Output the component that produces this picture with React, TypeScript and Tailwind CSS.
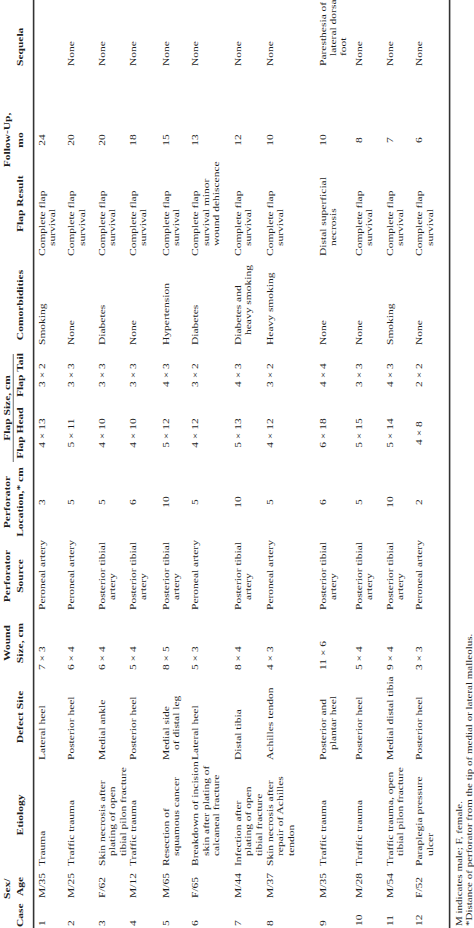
import React from "react";

type Cell = string | string[];
type Row = { h: string; c: Cell[] };

const colCls = [
  "w-[28px] pl-[2px]",
  "w-[32px] pl-[2px]",
  "w-[106px] pl-[2px]",
  "w-[90px] pl-[2px]",
  "w-[58px] pl-[2px]",
  "w-[76px] pl-[4px]",
  "w-[72px] text-center",
  "w-[66px] text-center",
  "w-[50px] text-center",
  "w-[90px] pl-[5px]",
  "w-[84px] pl-[4px]",
  "w-[72px] text-center",
  "w-[104px] pl-[38px]",
];

const rows: Row[] = [
  { h: "h-[37.5px]", c: ["1", "M/35", ["Trauma"], ["Lateral heel"], "7 × 3", ["Peroneal artery"], "3", "4 × 13", "3 × 2", ["Smoking"], ["Complete flap", "survival"], "24", [""]] },
  { h: "h-[37.5px]", c: ["2", "M/25", ["Traffic trauma"], ["Posterior heel"], "6 × 4", ["Peroneal artery"], "5", "5 × 11", "3 × 3", ["None"], ["Complete flap", "survival"], "20", ["None"]] },
  { h: "h-[38.7px]", c: ["3", "F/62", ["Skin necrosis after", "plating of open", "tibial pilon fracture"], ["Medial ankle"], "6 × 4", ["Posterior tibial", "artery"], "5", "4 × 10", "3 × 3", ["Diabetes"], ["Complete flap", "survival"], "20", ["None"]] },
  { h: "h-[41.3px]", c: ["4", "M/12", ["Traffic trauma"], ["Posterior heel"], "5 × 4", ["Posterior tibial", "artery"], "6", "4 × 10", "3 × 3", ["None"], ["Complete flap", "survival"], "18", ["None"]] },
  { h: "h-[37.5px]", c: ["5", "M/65", ["Resection of", "squamous cancer"], ["Medial side", "of distal leg"], "8 × 5", ["Posterior tibial", "artery"], "10", "5 × 12", "4 × 3", ["Hypertension"], ["Complete flap", "survival"], "15", ["None"]] },
  { h: "h-[52.5px]", c: ["6", "F/65", ["Breakdown of incision", "skin after plating of", "calcaneal fracture"], ["Lateral heel"], "5 × 3", ["Peroneal artery"], "5", "4 × 12", "3 × 2", ["Diabetes"], ["Complete flap", "survival minor", "wound dehiscence"], "13", ["None"]] },
  { h: "h-[40px]", c: ["7", "M/44", ["Infection after", "plating of open", "tibial fracture"], ["Distal tibia"], "8 × 4", ["Posterior tibial", "artery"], "10", "5 × 13", "4 × 3", ["Diabetes and", "heavy smoking"], ["Complete flap", "survival"], "12", ["None"]] },
  { h: "h-[66.2px]", c: ["8", "M/37", ["Skin necrosis after", "repair of Achilles", "tendon"], ["Achilles tendon"], "4 × 3", ["Peroneal artery"], "5", "4 × 12", "3 × 2", ["Heavy smoking"], ["Complete flap", "survival"], "10", ["None"]] },
  { h: "h-[45px]", c: ["9", "M/35", ["Traffic trauma"], ["Posterior and", "plantar heel"], "11 × 6", ["Posterior tibial", "artery"], "6", "6 × 18", "4 × 4", ["None"], ["Distal superficial", "necrosis"], "10", ["Paresthesia of", "lateral dorsal", "foot"]] },
  { h: "h-[38.8px]", c: ["10", "M/28", ["Traffic trauma"], ["Posterior heel"], "5 × 4", ["Posterior tibial", "artery"], "5", "5 × 15", "3 × 3", ["None"], ["Complete flap", "survival"], "8", ["None"]] },
  { h: "h-[37.5px]", c: ["11", "M/54", ["Traffic trauma, open", "tibial pilon fracture"], ["Medial distal tibia"], "9 × 4", ["Posterior tibial", "artery"], "10", "5 × 14", "4 × 3", ["Smoking"], ["Complete flap", "survival"], "7", ["None"]] },
  { h: "h-[45.4px]", c: ["12", "F/52", ["Paraplegia pressure", "ulcer"], ["Posterior heel"], "3 × 3", ["Peroneal artery"], "2", "4 × 8", "2 × 2", ["None"], ["Complete flap", "survival"], "6", ["None"]] },
];

function CellView({ v }: { v: Cell }) {
  if (Array.isArray(v)) {
    return (
      <div className="pl-[10px] -indent-[10px] whitespace-nowrap">
        {v.map((line, i) => (
          <React.Fragment key={i}>
            {i > 0 && <br />}
            {line}
          </React.Fragment>
        ))}
      </div>
    );
  }
  return <div className="whitespace-nowrap">{v}</div>;
}

export default function App() {
  return (
    <div className="w-[474px] h-[928px] overflow-hidden bg-white">
      <div className="w-[928px] h-[592.5px] origin-top-left [transform:translateY(928px)_rotate(-90deg)_scaleY(0.8)] font-['Liberation_Serif',serif] text-[11.5px] text-[#1e1e1e]">
        {/* header */}
        <div className="border-b-2 border-[#333] pt-[0.6px] pb-[8.4px] font-bold leading-[16px]">
          <div className="flex h-[16px] whitespace-nowrap">
            <div className="w-[28px] shrink-0" />
            <div className="w-[32px] shrink-0 pl-[1px]">Sex/</div>
            <div className="w-[106px] shrink-0" />
            <div className="w-[90px] shrink-0" />
            <div className="w-[58px] shrink-0 text-center">Wound</div>
            <div className="w-[76px] shrink-0 text-center">Perforator</div>
            <div className="w-[72px] shrink-0 text-center">Perforator</div>
            <div className="w-[116px] shrink-0 px-[4px]">
              <div className="border-b border-[#444] text-center h-[16px]">Flap Size, cm</div>
            </div>
            <div className="w-[90px] shrink-0" />
            <div className="w-[84px] shrink-0" />
            <div className="w-[72px] shrink-0 text-center">Follow-Up,</div>
            <div className="w-[104px] shrink-0" />
          </div>
          <div className="flex h-[16px] whitespace-nowrap">
            <div className="w-[28px] shrink-0 pl-[1px]">Case</div>
            <div className="w-[32px] shrink-0 pl-[4px]">Age</div>
            <div className="w-[106px] shrink-0 text-center">Etiology</div>
            <div className="w-[90px] shrink-0 text-center">Defect Site</div>
            <div className="w-[58px] shrink-0 text-center">Size, cm</div>
            <div className="w-[76px] shrink-0 text-center">Source</div>
            <div className="w-[72px] shrink-0 text-center">Location,* cm</div>
            <div className="w-[66px] shrink-0 text-center">Flap Head</div>
            <div className="w-[50px] shrink-0 text-center">Flap Tail</div>
            <div className="w-[90px] shrink-0 text-center">Comorbidities</div>
            <div className="w-[84px] shrink-0 pl-[28px] text-center">Flap Result</div>
            <div className="w-[72px] shrink-0 text-center">mo</div>
            <div className="w-[104px] shrink-0 pl-[38px]">Sequela</div>
          </div>
        </div>
        {/* body */}
        <div className="border-b-2 border-[#333] leading-[13px]">
          {rows.map((r, i) => (
            <div key={i} className={`flex pt-[3px] ${r.h}`}>
              {r.c.map((v, j) => (
                <div key={j} className={`shrink-0 ${colCls[j]}`}>
                  <CellView v={v} />
                </div>
              ))}
            </div>
          ))}
        </div>
        {/* footnotes */}
        <div className="mt-[4px] pl-[2px] leading-[13px] text-[11px] whitespace-nowrap">
          <div>M indicates male; F, female.</div>
          <div>*Distance of perforator from the tip of medial or lateral malleolus.</div>
        </div>
      </div>
    </div>
  );
}
